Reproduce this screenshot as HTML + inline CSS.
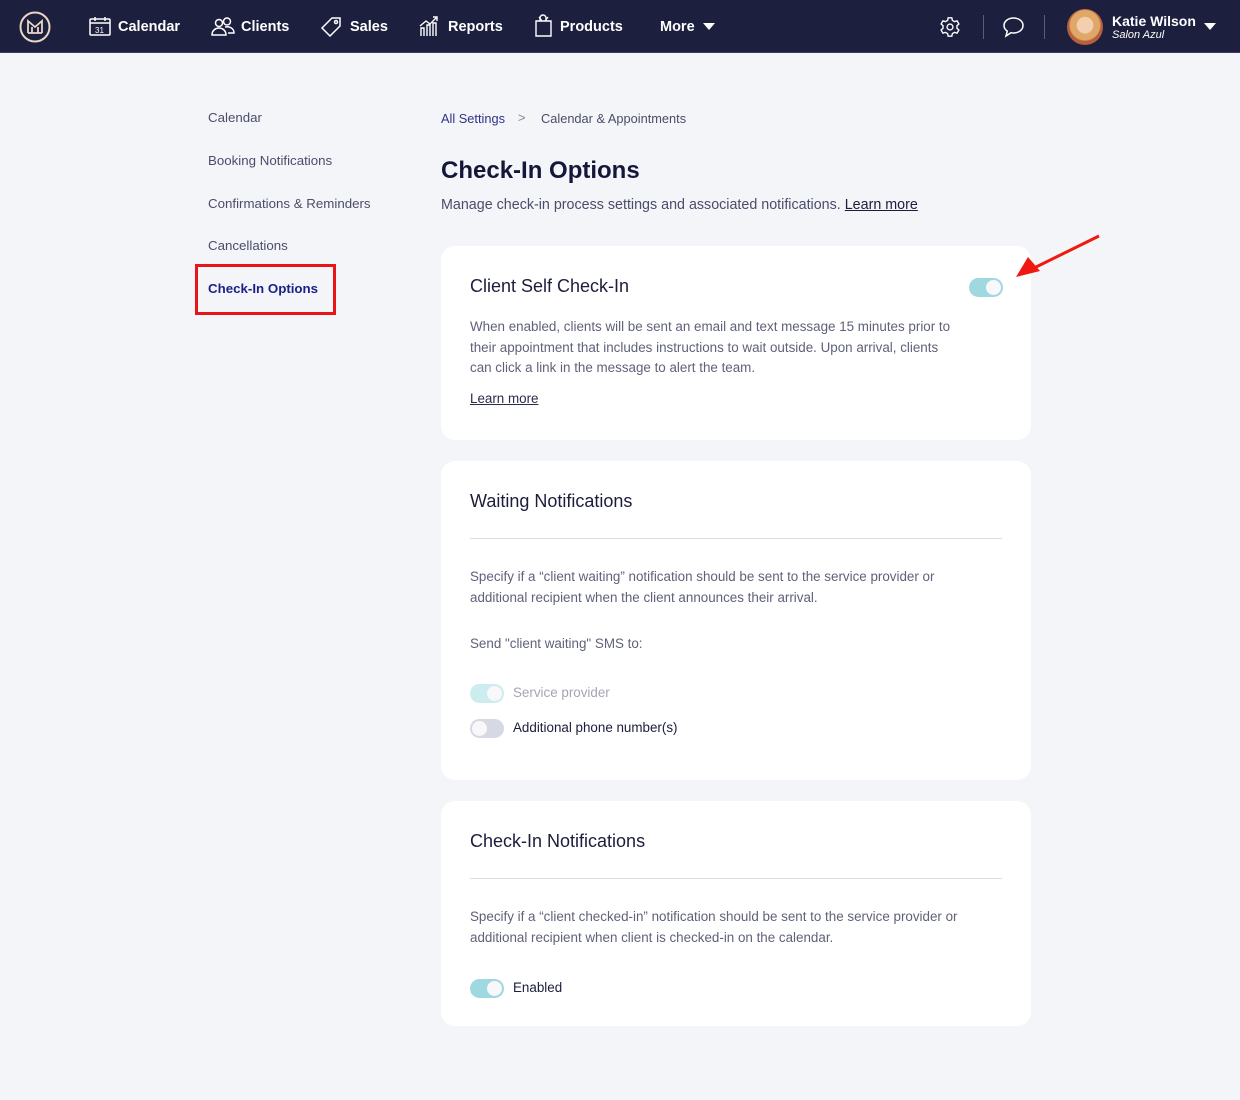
<!DOCTYPE html>
<html><head><meta charset="utf-8"><style>
*{box-sizing:border-box;margin:0;padding:0}
body{width:1240px;height:1100px;background:#f4f5f8;font-family:"Liberation Sans",sans-serif;position:relative;overflow:hidden;color:#1b1d3a}
.nav{position:absolute;left:0;top:0;width:1240px;height:53px;background:#1c1f3e;border-bottom:1px solid #3a3d5c}
.a{position:absolute;white-space:nowrap}
.ni{color:#fff;font-weight:bold;font-size:14.5px;top:19px}
.side{font-size:13.3px;color:#4a4d6a}
.card{position:absolute;left:441px;width:590px;background:#fff;border-radius:14px}
.h{font-size:18px;color:#1b1d3a}
.p{font-size:13.4px;color:#5f6278;line-height:20.5px}
.tg{position:absolute;width:34px;height:19px;border-radius:10px;background:#9fd8df}
.tg::after{content:"";position:absolute;top:2px;left:17px;width:15px;height:15px;border-radius:50%;background:#f8f8fa}
.tg.off{background:#d6d9e4}.tg.off::after{left:2px}
.tg.dis{background:#cdecef}
.hr{position:absolute;left:29px;width:532px;height:1px;background:#dcdde5}
</style></head><body>
<div class="nav">
<svg class="a" style="left:19px;top:11px" width="32" height="32" viewBox="0 0 32 32"><circle cx="16" cy="16" r="14.5" fill="none" stroke="#e9d6c4" stroke-width="2"/><path d="M9 22V10l7 6 7-6v12M9 22h14M13 22v-6M19 22v-6" fill="none" stroke="#e9d6c4" stroke-width="1.8"/></svg>
<svg class="a" style="left:89px;top:16px" width="22" height="20" viewBox="0 0 22 20" fill="none" stroke="#fff" stroke-width="1.5"><rect x="1" y="3" width="20" height="16" rx="1"/><path d="M1 7h20M6 1v4M16 1v4"/><text x="6" y="17" font-size="8" fill="#fff" stroke="none" font-family="Liberation Sans">31</text></svg>
<div class="a ni" style="left:118px">Calendar</div>
<svg class="a" style="left:211px;top:17px" width="24" height="19" viewBox="0 0 24 19" fill="none" stroke="#fff" stroke-width="1.5"><circle cx="8" cy="6" r="3.5"/><circle cx="16" cy="4.5" r="3.5"/><path d="M1 18c0-5 4-7 7-7s7 2 7 7zM14 10c4-1 9 1 9 6h-6"/></svg>
<div class="a ni" style="left:241px">Clients</div>
<svg class="a" style="left:320px;top:16px" width="23" height="21" viewBox="0 0 23 21" fill="none" stroke="#fff" stroke-width="1.5"><path d="M12 2h8v8L10 20 2 12z"/><circle cx="16" cy="6" r="1.5"/></svg>
<div class="a ni" style="left:350px">Sales</div>
<svg class="a" style="left:419px;top:15px" width="20" height="22" viewBox="0 0 20 22" fill="none" stroke="#fff" stroke-width="1.4"><path d="M2 21V13h3v8M8 21V10h3v11M14 21V8h3v13M1 11l6-5 4 3 7-7M14 2h4v4"/></svg>
<div class="a ni" style="left:448px">Reports</div>
<svg class="a" style="left:534px;top:14px" width="19" height="23" viewBox="0 0 19 23" fill="none" stroke="#fff" stroke-width="1.4"><path d="M2 7h15v15H2zM6 7V4a3 3 0 016 0v3M5 3l3 4M14 3l-3 4"/></svg>
<div class="a ni" style="left:560px">Products</div>
<div class="a ni" style="left:660px">More</div>
<div class="a" style="left:703px;top:23px;border-left:6px solid transparent;border-right:6px solid transparent;border-top:7px solid #fff"></div>
<svg class="a" style="left:939px;top:16px" width="22" height="22" viewBox="0 0 24 24" fill="none" stroke="#fff" stroke-width="1.5"><circle cx="12" cy="12" r="3.2"/><path d="M10 2h4l.6 2.8 2.4 1.4 2.7-.9 2 3.4-2.1 1.9v2.8l2.1 1.9-2 3.4-2.7-.9-2.4 1.4L14 22h-4l-.6-2.8-2.4-1.4-2.7.9-2-3.4 2.1-1.9v-2.8L2.3 8.7l2-3.4 2.7.9 2.4-1.4z"/></svg>
<div class="a" style="left:983px;top:15px;width:1px;height:24px;background:#5a5d78"></div>
<svg class="a" style="left:1002px;top:16px" width="23" height="22" viewBox="0 0 23 22" fill="none" stroke="#fff" stroke-width="1.5"><path d="M11.5 2C6 2 2 5.5 2 9.5c0 2.3 1.3 4.3 3.3 5.6L4 20l5-3.3c.8.2 1.7.3 2.5.3 5.5 0 9.5-3.4 9.5-7.5S17 2 11.5 2z"/></svg>
<div class="a" style="left:1044px;top:15px;width:1px;height:24px;background:#5a5d78"></div>
<div class="a" style="left:1067px;top:9px;width:36px;height:36px;border-radius:50%;background:radial-gradient(circle at 50% 45%,#f3cfb0 0 30%,#e0a868 32% 55%,#b6603c 60%)"></div>
<div class="a" style="left:1112px;top:13px;color:#fff;font-weight:bold;font-size:14px">Katie Wilson</div>
<div class="a" style="left:1112px;top:29px;color:#fff;font-size:11px;font-style:italic">Salon Azul</div>
<div class="a" style="left:1204px;top:23px;border-left:6px solid transparent;border-right:6px solid transparent;border-top:7px solid #fff"></div>
</div>

<div class="a side" style="left:208px;top:110px">Calendar</div>
<div class="a side" style="left:208px;top:153px">Booking Notifications</div>
<div class="a side" style="left:208px;top:196px">Confirmations &amp; Reminders</div>
<div class="a side" style="left:208px;top:238px">Cancellations</div>
<div class="a" style="left:195px;top:264px;width:141px;height:51px;border:3px solid #e8141a"></div>
<div class="a" style="left:208px;top:281px;font-size:13.3px;color:#1a1f8a;font-weight:bold">Check-In Options</div>

<div class="a" style="left:441px;top:111px;font-size:12.8px;color:#2f3388">All Settings</div>
<div class="a" style="left:518px;top:110px;font-size:13px;color:#888">&gt;</div>
<div class="a" style="left:541px;top:111px;font-size:12.8px;color:#4a4d6a">Calendar &amp; Appointments</div>
<div class="a" style="left:441px;top:157px;font-size:24px;font-weight:bold;color:#15173a">Check-In Options</div>
<div class="a" style="left:441px;top:197px;font-size:14.3px;color:#4a4d6a">Manage check-in process settings and associated notifications. <span style="color:#1b1d3a;text-decoration:underline">Learn more</span></div>

<div class="card" style="top:246px;height:194px">
<div class="a h" style="left:29px;top:30px">Client Self Check-In</div>
<div class="tg" style="left:528px;top:32px"></div>
<div class="a p" style="left:29px;top:71px;white-space:normal;width:492px">When enabled, clients will be sent an email and text message 15 minutes prior to their appointment that includes instructions to wait outside. Upon arrival, clients can click a link in the message to alert the team.</div>
<div class="a" style="left:29px;top:145px;font-size:13.4px;text-decoration:underline;color:#2a2d4a">Learn more</div>
</div>
<svg class="a" style="left:1012px;top:234px" width="90" height="46" viewBox="0 0 90 46"><path d="M87 2L22 34" stroke="#ee1a10" stroke-width="3"/><path d="M4 43l12-20 12 14z" fill="#ee1a10"/></svg>

<div class="card" style="top:461px;height:319px">
<div class="a h" style="left:29px;top:30px">Waiting Notifications</div>
<div class="hr" style="top:77px"></div>
<div class="a p" style="left:29px;top:106px;white-space:normal;width:500px">Specify if a “client waiting” notification should be sent to the service provider or additional recipient when the client announces their arrival.</div>
<div class="a p" style="left:29px;top:173px">Send "client waiting" SMS to:</div>
<div class="tg dis" style="left:29px;top:223px"></div>
<div class="a p" style="left:72px;top:222px;color:#a4a6b6">Service provider</div>
<div class="tg off" style="left:29px;top:258px"></div>
<div class="a p" style="left:72px;top:257px;color:#1b1d3a">Additional phone number(s)</div>
</div>

<div class="card" style="top:801px;height:225px">
<div class="a h" style="left:29px;top:30px">Check-In Notifications</div>
<div class="hr" style="top:77px"></div>
<div class="a p" style="left:29px;top:106px;white-space:normal;width:500px">Specify if a “client checked-in” notification should be sent to the service provider or additional recipient when client is checked-in on the calendar.</div>
<div class="tg" style="left:29px;top:178px"></div>
<div class="a p" style="left:72px;top:177px;color:#1b1d3a">Enabled</div>
</div>
</body></html>
